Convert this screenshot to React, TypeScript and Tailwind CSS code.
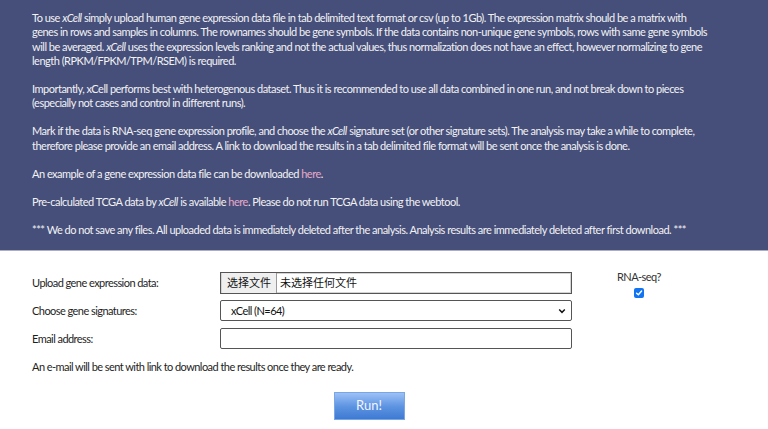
const font = { fontFamily: "Lato, 'Noto Sans CJK SC', sans-serif" };

function Here() {
  return <a className="text-[#e6a9c9]">here</a>;
}

export default function App() {
  return (
    <div className="w-[768px] h-[429px] bg-white overflow-hidden text-[11px] tracking-[-0.5px]" style={font}>
      <div className="bg-[#464f7a] border-b border-[#a9aec4] pl-[32px] pr-[20px] pt-[11px] pb-[13px] text-[#f2f2f4] leading-[14.33px] flex flex-col gap-[13.67px]">
        <p>
          To use <i>xCell</i> simply upload human gene expression data file in tab delimited text format or csv (up to 1Gb). The expression matrix should be a matrix with<br />
          genes in rows and samples in columns. The rownames should be gene symbols. If the data contains non-unique gene symbols, rows with same gene symbols<br />
          will be averaged. <i>xCell</i> uses the expression levels ranking and not the actual values, thus normalization does not have an effect, however normalizing to gene<br />
          length (RPKM/FPKM/TPM/RSEM) is required.
        </p>
        <p>
          Importantly, xCell performs best with heterogenous dataset. Thus it is recommended to use all data combined in one run, and not break down to pieces<br />
          (especially not cases and control in different runs).
        </p>
        <p>
          Mark if the data is RNA-seq gene expression profile, and choose the <i>xCell</i> signature set (or other signature sets). The analysis may take a while to complete,<br />
          therefore please provide an email address. A link to download the results in a tab delimited file format will be sent once the analysis is done.
        </p>
        <p>
          An example of a gene expression data file can be downloaded <Here />.
        </p>
        <p>
          Pre-calculated TCGA data by <i>xCell</i> is available <Here />. Please do not run TCGA data using the webtool.
        </p>
        <p>
          *** We do not save any files. All uploaded data is immediately deleted after the analysis. Analysis results are immediately deleted after first download. ***
        </p>
      </div>

      <div className="pl-[32px] pt-[18px] text-[#1e1e1e] tracking-[-0.55px]">
        <div className="w-[674px] grid grid-cols-[188px_352px_134px] grid-rows-[28px_28px_28px_28px]">
          <div className="flex items-center">Upload gene expression data:</div>
          <div className="flex items-center">
            <div className="w-full h-[22px] border border-[#555] shadow-[inset_0_0_0_1px_#d4d4d4] flex items-center pl-px">
              <span className="h-[20px] px-[5px] bg-[#efefef] border-r border-[#999] flex items-center text-[11px] tracking-normal text-[#111]">选择文件</span>
              <span className="pl-[3px] text-[11px] tracking-normal text-[#111]">未选择任何文件</span>
            </div>
          </div>
          <div className="row-span-2 flex flex-col items-center">
            <div className="h-[14px] leading-[14px] text-[#333] pt-px">RNA-seq?</div>
            <div className="mt-[5px] w-[10px] h-[10px] rounded-[2px] bg-[#1274f0] flex items-center justify-center">
              <svg viewBox="0 0 10 10" className="w-[8px] h-[8px]">
                <path d="M2 5.2 L4.2 7.3 L8.2 2.6" fill="none" stroke="white" strokeWidth="1.8" strokeLinecap="round" strokeLinejoin="round" />
              </svg>
            </div>
          </div>

          <div className="flex items-center">Choose gene signatures:</div>
          <div className="flex items-center">
            <div className="w-full h-[21px] border border-[#555] rounded-[2px] flex items-center justify-between pl-[10px] pr-[5px]">
              <span className="text-[#111]">xCell (N=64)</span>
              <svg viewBox="0 0 10 10" className="w-[8px] h-[8px]">
                <path d="M1.5 3.2 L5 6.7 L8.5 3.2" fill="none" stroke="#111" strokeWidth="1.8" />
              </svg>
            </div>
          </div>

          <div className="flex items-center">Email address:</div>
          <div className="flex items-center">
            <div className="w-full h-[21px] border border-[#555] rounded-[2px]" />
          </div>
          <div />

          <div className="col-span-3 flex items-center">An e-mail will be sent with link to download the results once they are ready.</div>
        </div>
        <div className="w-[674px] flex justify-center mt-[11px]">
          <button className="w-[71px] h-[28px] bg-gradient-to-b from-[#9cc1f5] via-[#5f95e2] to-[#3d7ad3] border border-[#7aa6e6] text-[#f2f6ff] text-[13px] tracking-normal">
            Run!
          </button>
        </div>
      </div>
    </div>
  );
}
